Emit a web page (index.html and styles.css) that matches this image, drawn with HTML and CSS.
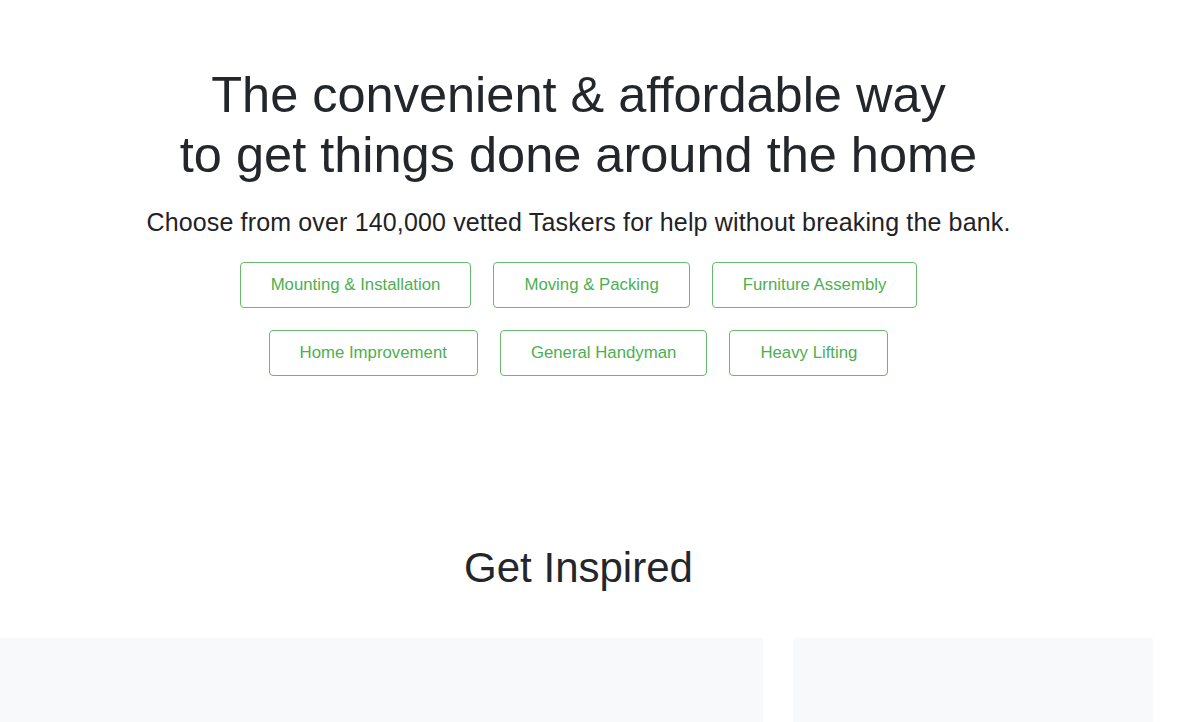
FILE: index.html
```html
<!DOCTYPE html>
<html lang="en">
<head>
<meta charset="utf-8">
<title>Get things done around the home</title>
<link rel="stylesheet" href="styles.css">
</head>
<body>
<main class="page">
  <section class="hero">
    <h1 class="hero-title">The convenient &amp; affordable way<br>to get things done around the home</h1>
    <p class="hero-sub">Choose from over 140,000 vetted Taskers for help without breaking the bank.</p>
    <div class="cats">
      <div class="cat-row">
        <a class="cat" href="#">Mounting &amp; Installation</a>
        <a class="cat" href="#">Moving &amp; Packing</a>
        <a class="cat" href="#">Furniture Assembly</a>
      </div>
      <div class="cat-row">
        <a class="cat" href="#">Home Improvement</a>
        <a class="cat" href="#">General Handyman</a>
        <a class="cat" href="#">Heavy Lifting</a>
      </div>
    </div>
  </section>
  <section class="inspired">
    <h2 class="inspired-title">Get Inspired</h2>
    <div class="cards">
      <div class="card card-wide"></div>
      <div class="card card-narrow"></div>
    </div>
  </section>
</main>
</body>
</html>
```

FILE: styles.css
```css
html, body {
  margin: 0;
  padding: 0;
  background: #ffffff;
}
body {
  font-family: "Liberation Sans", Arial, sans-serif;
  color: #23262b;
  overflow: hidden;
}
.page {
  width: 1157px;
}
.hero {
  padding-top: 65px;
  display: flex;
  flex-direction: column;
  align-items: center;
}
.hero-title {
  margin: 0;
  font-size: 50.5px;
  line-height: 60px;
  font-weight: 400;
  text-align: center;
  color: #23262b;
}
.hero-sub {
  margin: 21px 0 0;
  font-size: 25px;
  line-height: 33px;
  letter-spacing: 0.15px;
  text-align: center;
  color: #1f2226;
}
.cats {
  margin-top: 23px;
  display: flex;
  flex-direction: column;
  align-items: center;
  gap: 22px;
}
.cat-row {
  display: flex;
  gap: 22px;
}
.cat {
  display: flex;
  align-items: center;
  height: 44px;
  padding: 0 30px;
  border: 1px solid #66bb6a;
  border-radius: 4px;
  color: #4caf50;
  font-size: 16.8px;
  text-decoration: none;
  white-space: nowrap;
}
.inspired {
  margin-top: 168px;
}
.inspired-title {
  margin: 0;
  font-size: 42px;
  line-height: 48px;
  font-weight: 400;
  text-align: center;
  color: #23262b;
}
.cards {
  margin-top: 46px;
  display: grid;
  grid-template-columns: 763px 360px;
  gap: 30px;
}
.card {
  height: 200px;
  background: #f8f9fb;
}
```
